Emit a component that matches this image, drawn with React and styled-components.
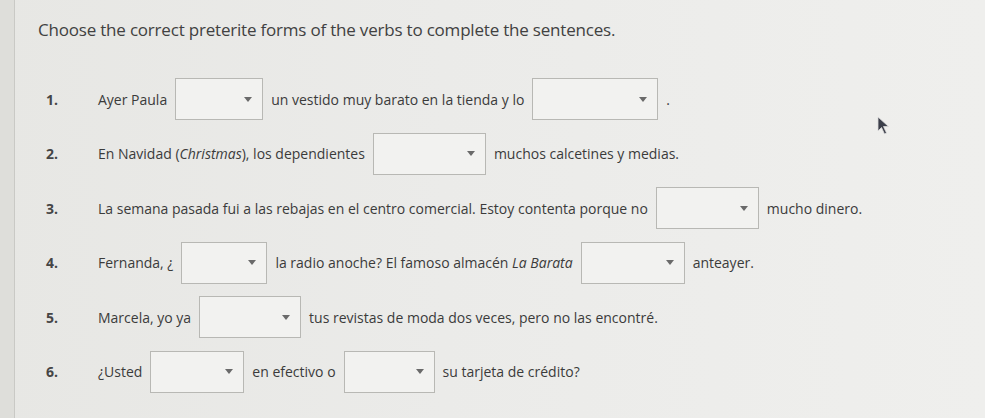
import React from "react";
import styled, { createGlobalStyle } from "styled-components";

const GlobalStyle = createGlobalStyle`
  html, body {
    margin: 0;
    padding: 0;
  }
  body {
    width: 985px;
    height: 418px;
    overflow: hidden;
    background: linear-gradient(90deg, #e7e7e4 0%, #ebebe9 45%, #efefed 100%);
    font-family: "Open Sans", "DejaVu Sans", sans-serif;
    color: #3b3b3b;
  }
`;

const Page = styled.div`
  position: relative;
  display: flex;
  height: 418px;
`;

const Gutter = styled.div`
  width: 14px;
  flex-shrink: 0;
  background: #dededa;
  border-right: 1px solid #c9c9c5;
`;

const Content = styled.div`
  flex: 1;
  padding: 16px 0 0 23px;
`;

const Title = styled.h1`
  margin: 0 0 34px;
  font-size: 17px;
  font-weight: 500;
  letter-spacing: -0.2px;
  color: #414141;
  line-height: 28px;
`;

const List = styled.ol`
  list-style: none;
  margin: 0;
  padding: 0 0 0 8px;
  display: flex;
  flex-direction: column;
  gap: 12.5px;
`;

const Row = styled.li`
  display: flex;
  align-items: center;
  height: 42px;
  font-size: 14px;
  white-space: nowrap;
`;

const Num = styled.span`
  width: 52px;
  flex-shrink: 0;
  font-weight: 700;
  color: #454545;
`;

const Italic = styled.i`
  font-style: italic;
`;

const SelectBox = styled.span`
  display: inline-flex;
  align-items: center;
  justify-content: flex-end;
  box-sizing: border-box;
  width: ${(p) => p.$w}px;
  height: 42px;
  margin: 0 8px;
  padding-right: 10px;
  background: #f2f2f0;
  border: 1px solid #b8b8b4;
`;

const Arrow = styled.span`
  width: 0;
  height: 0;
  border-left: 4px solid transparent;
  border-right: 4px solid transparent;
  border-top: 5px solid #6a6a6a;
`;

const Cursor = styled.svg`
  position: absolute;
  left: 877px;
  top: 116px;
`;

function Select({ w }) {
  return (
    <SelectBox $w={w}>
      <Arrow />
    </SelectBox>
  );
}

export default function App() {
  return (
    <>
      <GlobalStyle />
      <Page>
        <Gutter />
        <Content>
          <Title>Choose the correct preterite forms of the verbs to complete the sentences.</Title>
          <List>
            <Row>
              <Num>1.</Num>
              <span>Ayer Paula</span>
              <Select w={88} />
              <span>un vestido muy barato en la tienda y lo</span>
              <Select w={126} />
              <span>.</span>
            </Row>
            <Row>
              <Num>2.</Num>
              <span>
                En Navidad (<Italic>Christmas</Italic>), los dependientes
              </span>
              <Select w={113} />
              <span>muchos calcetines y medias.</span>
            </Row>
            <Row>
              <Num>3.</Num>
              <span>La semana pasada fui a las rebajas en el centro comercial. Estoy contenta porque no</span>
              <Select w={103} />
              <span>mucho dinero.</span>
            </Row>
            <Row>
              <Num>4.</Num>
              <span>Fernanda, ¿</span>
              <Select w={86} />
              <span>
                la radio anoche? El famoso almacén <Italic>La Barata</Italic>
              </span>
              <Select w={104} />
              <span>anteayer.</span>
            </Row>
            <Row>
              <Num>5.</Num>
              <span>Marcela, yo ya</span>
              <Select w={102} />
              <span>tus revistas de moda dos veces, pero no las encontré.</span>
            </Row>
            <Row>
              <Num>6.</Num>
              <span>¿Usted</span>
              <Select w={94} />
              <span>en efectivo o</span>
              <Select w={91} />
              <span>su tarjeta de crédito?</span>
            </Row>
          </List>
        </Content>
        <Cursor width="14" height="20" viewBox="0 0 14 20">
          <path d="M1 1 L1 15 L4.5 11.5 L7.5 18 L9.5 17 L6.5 10.5 L11.5 10.5 Z" fill="#3c3f4a" stroke="#dcdcdc" strokeWidth="0.8" />
        </Cursor>
      </Page>
    </>
  );
}
